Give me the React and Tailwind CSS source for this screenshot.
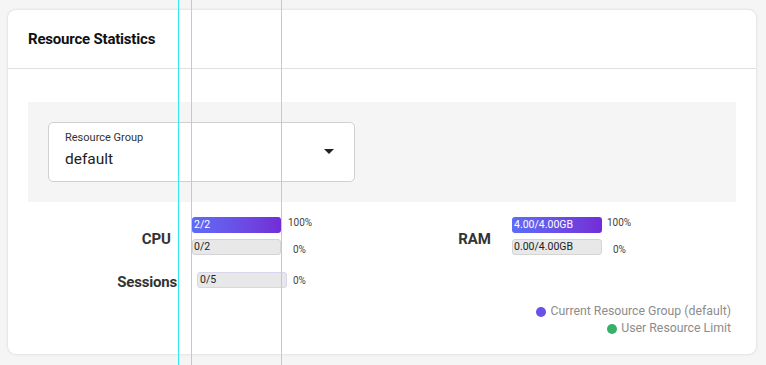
import React from "react";

function Bar({ text, full, w = "w-[89px]", extra = "" }) {
  return full ? (
    <div className={`${w} h-[16px] rounded-[3px] bg-gradient-to-r from-[#5c6cf6] to-[#722cd7] text-white text-[10.5px] leading-[16px] pl-[2px] ${extra}`}>
      {text}
    </div>
  ) : (
    <div className={`${w} h-[16px] rounded-[3px] bg-[#e8e8e8] border border-[#d4d4d4] text-[#222] text-[10.5px] leading-[14px] pl-[1px] ${extra}`}>
      {text}
    </div>
  );
}

export default function App() {
  return (
    <div className="relative w-[766px] h-[365px] bg-[#f5f5f5] pt-[10px] pl-[8px] font-['Roboto',sans-serif] overflow-hidden">
      <div className="w-[748px] h-[344px] bg-white rounded-[8px] shadow-[0_0_3px_rgba(0,0,0,0.15)]">
        <div className="h-[59px] flex items-center px-[20px] border-b border-[#e0e0e0]">
          <span className="text-[15px] font-bold text-[#111] tracking-[-0.2px]">Resource Statistics</span>
        </div>
        <div className="px-[20px] pt-[33px]">
          <div className="h-[100px] bg-[#f5f5f5] p-[20px]">
            <div className="w-[307px] h-[60px] bg-white border border-[#d0d0d0] rounded-[5px] flex items-start justify-between pl-[16px] pr-[20px]">
              <div className="flex flex-col pt-[8px]">
                <span className="text-[11px] leading-[14px] text-[#333]">Resource Group</span>
                <span className="text-[15.5px] leading-[20px] mt-[4px] text-[#222]">default</span>
              </div>
              <svg className="mt-[26px]" width="10" height="5" viewBox="0 0 10 5">
                <path d="M0 0 L10 0 L5 5 Z" fill="#222" />
              </svg>
            </div>
          </div>

          <div className="flex pt-[15px]">
            <div className="w-[354px] flex flex-col">
              <div className="flex items-start">
                <div className="w-[143px] text-right font-bold text-[15px] leading-[20px] text-[#333] mt-[12px]">CPU</div>
                <div className="ml-[21px] flex flex-col gap-[6px]">
                  <Bar text="2/2" full />
                  <Bar text="0/2" />
                </div>
                <div className="flex flex-col text-[10px] leading-[12px] text-[#444]">
                  <span className="ml-[7px]">100%</span>
                  <span className="ml-[12px] mt-[15px]">0%</span>
                </div>
              </div>
              <div className="flex items-start mt-[16px]">
                <div className="w-[149px] text-right font-bold text-[15px] leading-[20px] text-[#333] tracking-[-0.2px]">Sessions</div>
                <Bar text="0/5" w="w-[90px]" extra="ml-[20px] pl-[2px] border-[#d8d4ec]" />
                <span className="ml-[6px] mt-[3px] text-[10px] leading-[12px] text-[#444]">0%</span>
              </div>
            </div>
            <div className="flex items-start">
              <div className="w-[109px] text-right font-bold text-[15px] leading-[20px] text-[#333] mt-[12px]">RAM</div>
              <div className="ml-[21px] flex flex-col gap-[6px]">
                <Bar text="4.00/4.00GB" full w="w-[90px]" />
                <Bar text="0.00/4.00GB" w="w-[90px]" extra="border-[#cfdcd8]" />
              </div>
              <div className="flex flex-col text-[10px] leading-[12px] text-[#444]">
                <span className="ml-[5px]">100%</span>
                <span className="ml-[11px] mt-[15px]">0%</span>
              </div>
            </div>
          </div>

          <div className="flex flex-col items-end pr-[5px] mt-[11px] text-[12.3px] leading-[17px] text-[#8c8c8c]">
            <div className="flex items-center gap-[4px]">
              <span className="w-[10px] h-[10px] rounded-full bg-[#6a4fe8]" />
              <span>Current Resource Group (default)</span>
            </div>
            <div className="flex items-center gap-[4px]">
              <span className="w-[10px] h-[10px] rounded-full bg-[#38b068]" />
              <span>User Resource Limit</span>
            </div>
          </div>
        </div>
      </div>

      <div className="absolute top-0 left-[178px] w-px h-full bg-[#2fe8f2]" />
      <div className="absolute top-0 left-[191px] w-px h-full bg-[#8fdfe6]" />
      <div className="absolute top-0 left-[281px] w-px h-full bg-[#8fdfe6]" />
    </div>
  );
}
